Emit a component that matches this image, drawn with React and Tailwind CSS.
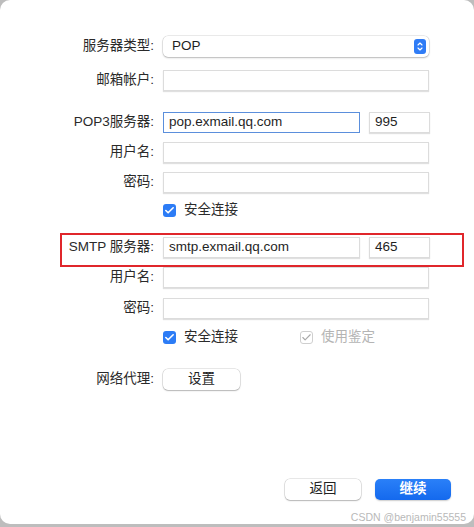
import { ChevronUp, ChevronDown, Check } from 'lucide-react';

// Mail account setup sheet (macOS style): server type, POP3 / SMTP servers, credentials.
const font = { fontFamily: '"Liberation Sans", "Noto Sans CJK SC", sans-serif' };

const Label = ({ children }) => (
  <div className="w-[155px] shrink-0 pr-[1px] text-right text-[13.5px] text-[#2a2a2a]">{children}</div>
);

const Field = ({ value, className = '', focused = false }) => (
  <div
    className={
      'flex h-[21px] items-center bg-white px-[5px] text-[13.5px] text-[#1f1f1f] ' +
      (focused
        ? 'border-[1.5px] border-[#5b8fdc] '
        : 'border border-[#dcdcdc] shadow-[0_1px_1px_rgba(0,0,0,0.12)] ') +
      className
    }
  >
    {value}
  </div>
);

const Row = ({ label, children, className = '' }) => (
  <div className={'flex items-center ' + className}>
    <Label>{label}</Label>
    <div className="ml-[8px] flex gap-[9px]">{children}</div>
  </div>
);

const Checkbox = ({ label, disabled = false }) => (
  <div className="flex items-center gap-[8px]">
    {disabled ? (
      <div className="flex h-[13px] w-[13px] items-center justify-center rounded-[3px] border border-[#cfcfcf] bg-white">
        <Check className="h-[11px] w-[11px] text-[#a9a9a9]" strokeWidth={2.5} />
      </div>
    ) : (
      <div className="flex h-[13px] w-[13px] items-center justify-center rounded-[3px] bg-[#2c7cf6]">
        <Check className="h-[11px] w-[11px] text-white" strokeWidth={3.5} />
      </div>
    )}
    <span className={'text-[13.5px] ' + (disabled ? 'text-[#b4b4b4]' : 'text-[#2b2b2b]')}>{label}</span>
  </div>
);

const MacButton = ({ children, className = '' }) => (
  <button
    className={
      'flex h-[21px] items-center justify-center rounded-[5px] bg-white text-[13.5px] text-[#222] shadow-[0_0_0_0.5px_rgba(0,0,0,0.18),0_1px_1.5px_rgba(0,0,0,0.22)] ' +
      className
    }
  >
    {children}
  </button>
);

export default function App() {
  return (
    <div className="h-[527px] w-[474px] overflow-hidden bg-[#bdbdbd]" style={font}>
      <div className="relative flex h-[524px] w-[474px] flex-col rounded-[10px] bg-white pt-[36px] pb-[24px]">
        {/* server type select */}
        <Row label="服务器类型:">
          <div className="flex h-[21px] w-[266px] items-center justify-between rounded-[5px] bg-white pl-[9px] pr-[3px] text-[13.5px] text-[#1f1f1f] shadow-[0_0_0_0.5px_rgba(0,0,0,0.15),0_1px_2px_rgba(0,0,0,0.22)]">
            <span>POP</span>
            <div className="flex h-[15px] w-[12px] flex-col items-center justify-center rounded-[3px] bg-[#2f7cf6]">
              <ChevronUp className="-mb-[3px] h-[8px] w-[8px] text-white" strokeWidth={3.5} />
              <ChevronDown className="h-[8px] w-[8px] text-white" strokeWidth={3.5} />
            </div>
          </div>
        </Row>
        <Row label="邮箱帐户:" className="mt-[13px]">
          <Field className="w-[266px]" />
        </Row>

        {/* incoming */}
        <Row label="POP3服务器:" className="mt-[21px]">
          <Field value="pop.exmail.qq.com" focused className="w-[197px]" />
          <Field value="995" className="w-[61px]" />
        </Row>
        <Row label="用户名:" className="mt-[9px]">
          <Field className="w-[266px]" />
        </Row>
        <Row label="密码:" className="mt-[9px]">
          <Field className="w-[266px]" />
        </Row>
        <div className="mt-[10px] flex h-[14px] items-center pl-[163px]">
          <Checkbox label="安全连接" />
        </div>

        {/* outgoing */}
        <div className="relative mt-[20px]">
          <Row label="SMTP 服务器:">
            <Field value="smtp.exmail.qq.com" className="w-[197px]" />
            <Field value="465" className="w-[61px]" />
          </Row>
          <div className="pointer-events-none absolute top-[-4px] left-[60px] h-[34px] w-[404px] border-2 border-[#e0262b]" />
        </div>
        <Row label="用户名:" className="mt-[9px]">
          <Field className="w-[266px]" />
        </Row>
        <Row label="密码:" className="mt-[10px]">
          <Field className="w-[266px]" />
        </Row>
        <div className="mt-[11px] flex h-[14px] items-center pl-[163px]">
          <Checkbox label="安全连接" />
          <div className="ml-[62px]">
            <Checkbox label="使用鉴定" disabled />
          </div>
        </div>

        <Row label="网络代理:" className="mt-[25px]">
          <MacButton className="w-[77px]">设置</MacButton>
        </Row>

        <div className="mt-auto flex justify-end gap-[14px] pr-[23px]">
          <MacButton className="w-[76px]">返回</MacButton>
          <button className="flex h-[21px] w-[76px] items-center justify-center rounded-[5px] bg-gradient-to-b from-[#2a80f8] to-[#1469ee] text-[13.5px] font-semibold text-white shadow-[0_1px_1.5px_rgba(0,0,0,0.2)]">
            继续
          </button>
        </div>

        <div className="absolute right-[8px] bottom-[1px] text-[10.5px] leading-[12px] text-[#b9b9b9]">CSDN @benjamin55555</div>
      </div>
    </div>
  );
}
